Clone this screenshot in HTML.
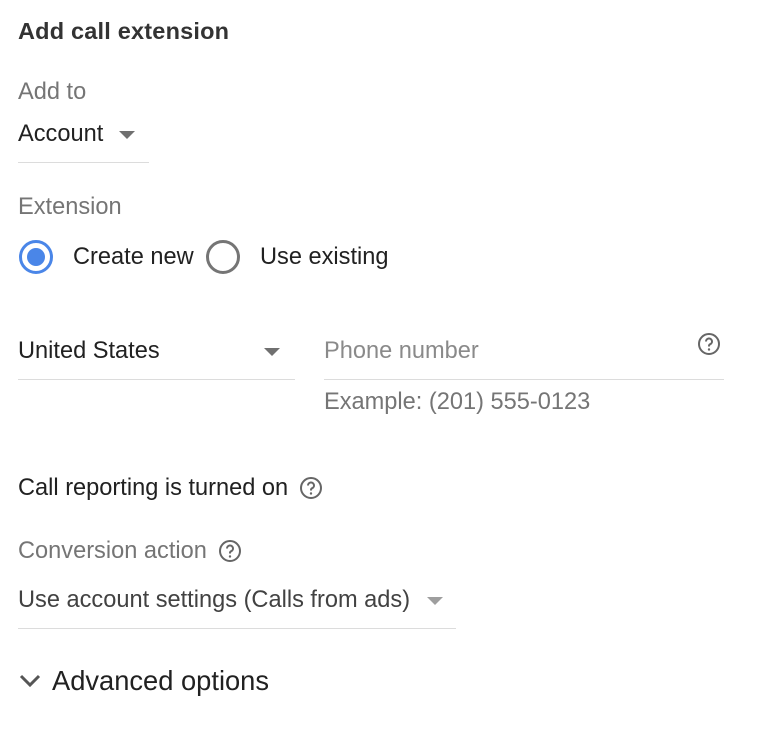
<!DOCTYPE html><html><head><style>
body{margin:0;width:768px;height:737px;background:#fff;position:relative;overflow:hidden;font-family:"Liberation Sans",Arial,sans-serif;}
.t{position:absolute;white-space:nowrap;line-height:1;font-size:23.6px;color:#212121;}
.g{color:#757575;}
.l{position:absolute;height:1px;background:#dcdcdc;}
.arr{position:absolute;width:0;height:0;border-left:8px solid transparent;border-right:8px solid transparent;border-top:8px solid #707070;}
svg{position:absolute;}
</style></head><body>
<div class="t" style="left:18px;top:20px;font-size:23.5px;font-weight:bold;color:#333;letter-spacing:0.2px">Add call extension</div>
<div class="t g" style="left:18px;top:81px">Add to</div>
<div class="t" style="left:18px;top:123px">Account</div>
<div class="arr" style="left:119px;top:131px"></div>
<div class="l" style="left:18px;top:162px;width:131px"></div>
<div class="t g" style="left:18px;top:196px">Extension</div>
<svg style="left:18px;top:239px" width="36" height="36"><circle cx="18" cy="18" r="15.5" fill="none" stroke="#4a86e8" stroke-width="3"/><circle cx="18" cy="18" r="9" fill="#4a86e8"/></svg>
<div class="t" style="left:73px;top:246px">Create new</div>
<svg style="left:205px;top:239px" width="36" height="36"><circle cx="18" cy="18" r="15.5" fill="none" stroke="#757575" stroke-width="3"/></svg>
<div class="t" style="left:260px;top:246px">Use existing</div>
<div class="t" style="left:18px;top:340px">United States</div>
<div class="arr" style="left:264px;top:348px"></div>
<div class="l" style="left:18px;top:379px;width:277px"></div>
<div class="t g" style="left:324px;top:340px;color:#8a8a8a">Phone number</div>
<svg style="left:697px;top:332px" width="24" height="24" viewBox="0 0 24 24"><circle cx="12" cy="12" r="10" fill="none" stroke="#666" stroke-width="2"/><path d="M9 9.5a3 3 0 1 1 4.2 2.7c-.8.4-1.2 1-1.2 1.8v.5" fill="none" stroke="#666" stroke-width="2"/><circle cx="12" cy="17.5" r="1.2" fill="#666"/></svg>
<div class="l" style="left:324px;top:379px;width:400px"></div>
<div class="t g" style="left:324px;top:391px">Example: (201) 555-0123</div>
<div class="t" style="left:18px;top:477px">Call reporting is turned on</div>
<svg style="left:299px;top:476px" width="24" height="24" viewBox="0 0 24 24"><circle cx="12" cy="12" r="10" fill="none" stroke="#666" stroke-width="2"/><path d="M9 9.5a3 3 0 1 1 4.2 2.7c-.8.4-1.2 1-1.2 1.8v.5" fill="none" stroke="#666" stroke-width="2"/><circle cx="12" cy="17.5" r="1.2" fill="#666"/></svg>
<div class="t g" style="left:18px;top:540px">Conversion action</div>
<svg style="left:218px;top:539px" width="24" height="24" viewBox="0 0 24 24"><circle cx="12" cy="12" r="10" fill="none" stroke="#666" stroke-width="2"/><path d="M9 9.5a3 3 0 1 1 4.2 2.7c-.8.4-1.2 1-1.2 1.8v.5" fill="none" stroke="#666" stroke-width="2"/><circle cx="12" cy="17.5" r="1.2" fill="#666"/></svg>
<div class="t" style="left:18px;top:589px;color:#424242">Use account settings (Calls from ads)</div>
<div class="arr" style="left:427px;top:597px;border-top-color:#9e9e9e"></div>
<div class="l" style="left:18px;top:628px;width:438px"></div>
<svg style="left:18px;top:670px" width="24" height="20"><path d="M3 6l9 9 9-9" fill="none" stroke="#555" stroke-width="3"/></svg>
<div class="t" style="left:52px;top:667px;font-size:27.3px">Advanced options</div>
</body></html>
